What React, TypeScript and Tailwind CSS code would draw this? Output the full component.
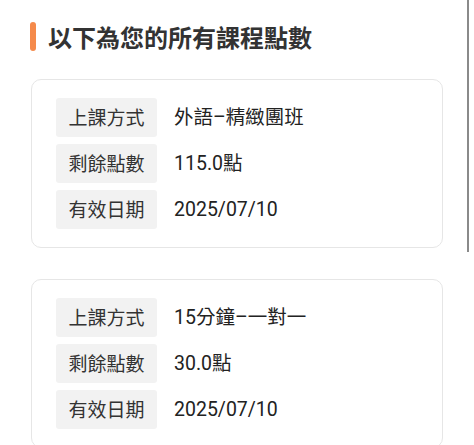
const courses = [
  { method: "外語–精緻團班", points: "115.0點", expiry: "2025/07/10" },
  { method: "15分鐘–一對一", points: "30.0點", expiry: "2025/07/10" },
];

function Row({ label, value }: { label: string; value: string }) {
  return (
    <div className="flex items-center gap-[17px]">
      <div className="flex h-[39px] w-[101px] items-center justify-center rounded-[3px] bg-[#f2f2f2] text-[19px] text-[#333]">
        {label}
      </div>
      <div className="pt-[1px] font-['Roboto','Noto_Sans_CJK_TC',sans-serif] text-[19.5px] text-[#222]">{value}</div>
    </div>
  );
}

export default function App() {
  return (
    <div className="relative h-[445px] w-[474px] overflow-hidden bg-white font-['Noto_Sans_CJK_TC','Noto_Sans',sans-serif]">
      {/* scroll thumb */}
      <div className="absolute right-[5px] top-0 h-[252px] w-[2px] bg-[#8a8a8a]" />

      <div className="flex items-center gap-[12px] pl-[30px] pt-[22px]">
        <div className="h-[29px] w-[6px] rounded-full bg-[#f58a4b]" />
        <h1 className="text-[24px] font-semibold leading-[29px] text-[#333]">以下為您的所有課程點數</h1>
      </div>

      <div className="mt-[28px] flex flex-col gap-[31px] pl-[31px] pr-[31px]">
        {courses.map((c, i) => (
          <div
            key={i}
            className="flex flex-col gap-[7px] rounded-[10px] border border-[#e6e6e6] px-[24px] pb-[18px] pt-[18px]"
          >
            <Row label="上課方式" value={c.method} />
            <Row label="剩餘點數" value={c.points} />
            <Row label="有效日期" value={c.expiry} />
          </div>
        ))}
      </div>
    </div>
  );
}
